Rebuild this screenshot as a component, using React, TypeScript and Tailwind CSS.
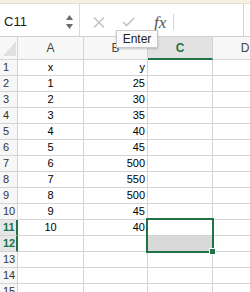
import React from "react";

const rows: [string, string][] = [
  ["x", "y"],
  ["1", "25"],
  ["2", "30"],
  ["3", "35"],
  ["4", "40"],
  ["5", "45"],
  ["6", "500"],
  ["7", "550"],
  ["8", "500"],
  ["9", "45"],
  ["10", "40"],
  ["", ""],
  ["", ""],
  ["", ""],
  ["", ""],
];

const line = "border-[#d4d4d4]";

export default function App() {
  return (
    <div className="relative w-[250px] h-[292px] overflow-hidden bg-white font-['Liberation_Sans',sans-serif] text-[11px] text-black select-none">
      {/* top strip */}
      <div className="h-[4px] bg-[#f6f0e2] border-b border-[#e6dfd0]" />
      {/* formula bar */}
      <div className="h-[33px] flex items-center border-b border-[#d0d0d0] bg-white">
        <div className="w-[80px] h-full flex items-center border-r border-[#dcdcdc] pt-[6px] pb-[2px]">
          <span className="pl-[4px] text-[13px] text-[#1a1a1a] flex-1">C11</span>
          <div className="flex flex-col items-center gap-[4px] mr-[6px]">
            <svg width="7" height="5" viewBox="0 0 7 5"><path d="M3.5 0L7 5H0z" fill="#6b6b6b" /></svg>
            <svg width="7" height="5" viewBox="0 0 7 5"><path d="M0 0H7L3.5 5z" fill="#6b6b6b" /></svg>
          </div>
        </div>
        <div className="flex items-center h-full flex-1 pt-[6px] pb-[2px]">
          <svg className="ml-[13px]" width="12" height="11" viewBox="0 0 12 11">
            <path d="M1 0.5L11 10.5M11 0.5L1 10.5" stroke="#c4c4c4" strokeWidth="1.6" />
          </svg>
          <svg className="ml-[17px]" width="13" height="10" viewBox="0 0 13 10">
            <path d="M1 5L4.5 8.5L12 1" stroke="#c4c4c4" strokeWidth="1.6" fill="none" />
          </svg>
          <span className="ml-[19px] font-['Liberation_Serif',serif] italic text-[17px] text-[#555] leading-none">
            fx
          </span>
          <div className="ml-[7px] w-px h-[16px] bg-[#d4d4d4]" />
        </div>
        <div className="mr-[6px] w-px h-full bg-[#d4d4d4] self-start -mt-[0px]" />
      </div>

      {/* grid */}
      <div className="grid grid-cols-[18px_66px_64px_65px_65px] grid-rows-[23px_repeat(15,16px)] w-[278px]">
        {/* header row */}
        <div className={`border-r border-b ${line} bg-[#f7f7f7] relative`}>
          <svg className="absolute left-[3px] top-[4px]" width="13" height="15" viewBox="0 0 13 15">
            <path d="M13 0V15H0z" fill="#e0e0e0" />
          </svg>
        </div>
        <div className={`border-r border-b ${line} bg-[#f7f7f7] flex items-center justify-center text-[12px] text-[#444]`}>A</div>
        <div className={`border-r border-b ${line} bg-[#f7f7f7] flex items-center justify-center text-[12px] text-[#444]`}>B</div>
        <div className={`border-r ${line} border-b-2 border-b-[#217346] bg-[#e2e2e2] flex items-center justify-center text-[12px] font-bold text-[#217346]`}>C</div>
        <div className={`border-r border-b ${line} bg-[#f7f7f7] flex items-center justify-center text-[12px] text-[#444]`}>D</div>

        {rows.map((r, i) => {
          const n = i + 1;
          const sel = n === 11 || n === 12;
          return (
            <React.Fragment key={n}>
              <div
                className={`border-b ${line} flex items-center pl-[3px] text-[11px] ${
                  sel
                    ? "border-r-2 border-r-[#217346] bg-[#e6e6e6] text-[#217346] font-bold"
                    : `border-r ${line} bg-[#f7f7f7] text-[#333]`
                }`}
              >
                {n}
              </div>
              <div className={`border-r border-b ${line} flex items-center justify-center`}>{r[0]}</div>
              <div className={`border-r border-b ${line} flex items-center justify-end pr-[2px]`}>{r[1]}</div>
              <div className={`border-r border-b ${line} ${n === 12 ? "bg-[#d9d9d9]" : ""}`} />
              <div className={`border-r border-b ${line}`} />
            </React.Fragment>
          );
        })}
      </div>

      {/* selection box */}
      <div className="absolute left-[146px] top-[218px] w-[68px] h-[35px] border-2 border-[#217346]" />
      <div className="absolute left-[209px] top-[248px] w-[7px] h-[7px] bg-[#217346] border border-white" />

      {/* tooltip */}
      <div className="absolute left-[116px] top-[30px] w-[42px] h-[18px] bg-[#fbfbfb] border border-[#c9c9c9] shadow-[0_1px_2px_rgba(0,0,0,0.2)] flex items-center justify-center text-[12px] text-[#222]">
        Enter
      </div>
    </div>
  );
}
